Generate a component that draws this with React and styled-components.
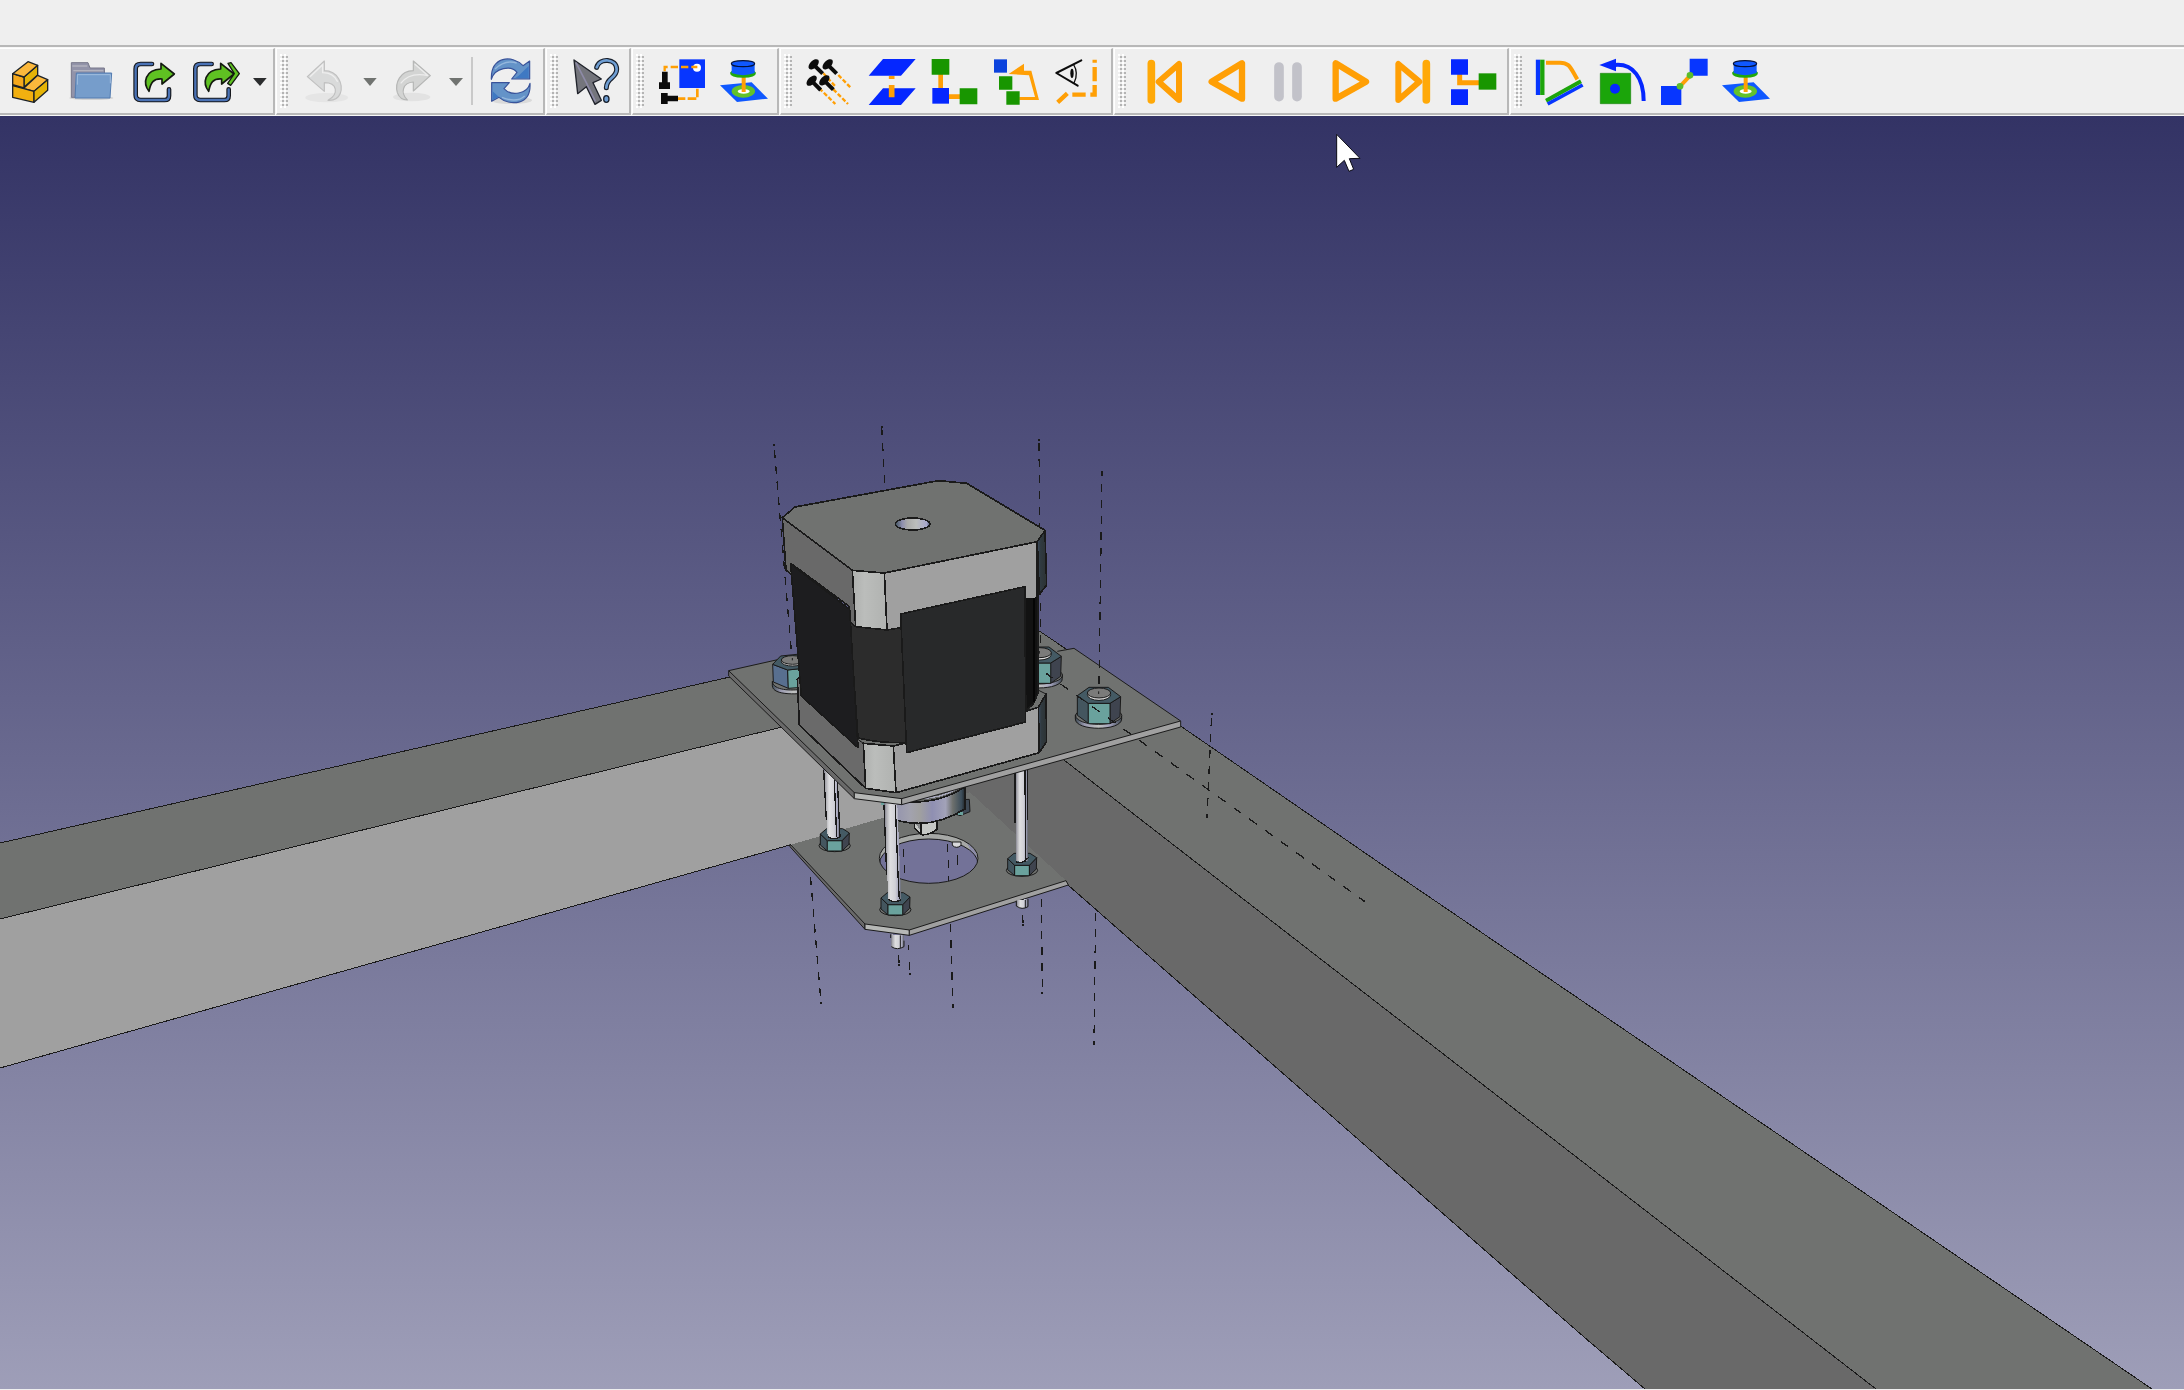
import React from "react";
import styled, { createGlobalStyle } from "styled-components";

const GlobalStyle = createGlobalStyle`
  *, *::before, *::after { box-sizing: border-box; }
  html, body { margin: 0; padding: 0; }
  body { background: #efefef; font-family: "Noto Sans", "Liberation Sans", sans-serif; }
`;

const Window = styled.div`
  display: flex;
  flex-direction: column;
  height: 100vh;
  overflow: hidden;
`;

const MenuArea = styled.header`
  flex: none;
  height: 45px;
  background: #efefef;
`;

const ToolbarRow = styled.div`
  flex: none;
  display: flex;
  gap: 1px;
  padding: 1px 0;
  overflow: hidden;
  background: #f7f7f7;
  border-top: 2px solid #b8b8b8;
`;

const ToolGroup = styled.div`
  flex: ${(p) => (p.$grow ? "1 0 auto" : "none")};
  display: flex;
  align-items: stretch;
  height: 67px;
  padding-right: ${(p) => (p.$cut ? 1 : 3)}px;
  background: #efefef;
  border-style: solid;
  border-color: #ffffff #b8b8b8 #b8b8b8 #ffffff;
  border-width: 1px ${(p) => (p.$grow ? 0 : 2)}px 2px ${(p) => (p.$cut ? 0 : 1)}px;
`;

const Handle = styled.span`
  width: 8px;
  height: 54px;
  margin: 5px 6px 5px 3px;
  background:
    conic-gradient(from 270deg at 50% 50%, #ffffff 90deg, transparent 0) 0 0 / 4px 4px,
    conic-gradient(from 90deg at 50% 50%, #b4b4b4 90deg, transparent 0) 0 0 / 4px 4px;
`;

const ToolButton = styled.button`
  display: flex;
  align-items: center;
  justify-content: center;
  width: ${(p) => (p.$narrow ? 24 : 62)}px;
  padding: 0;
  border: 0;
  background: transparent;
  &:hover:enabled { background: #e4e4e4; }
`;

const Glyph = styled.svg`
  display: block;
  flex: none;
  width: ${(p) => (p.$narrow ? 24 : 50)}px;
  height: 50px;
`;

const Divider = styled.span`
  width: 2px;
  height: 48px;
  margin: 8px 5px;
  background: #c9c9c9;
`;

const Viewport = styled.main`
  flex: 1;
  min-height: 0;
  background: linear-gradient(#333365, #9e9eb8);
  border-bottom: 1px solid #efefef;
`;

const Scene = styled.svg`
  display: block;
  width: 100%;
  height: 100%;
`;

const ORANGE = "#ff9f05";
const BLUE = "#0527ff";
const GREEN = "#189600";
const INK = "#1a1a1a";

function Tool({ label, x, disabled, narrow, children }) {
  return (
    <ToolButton type="button" aria-label={label} title={label} disabled={disabled} $narrow={narrow}>
      <Glyph $narrow={narrow} viewBox={`${x} 78 ${narrow ? 72 : 150} 150`} aria-hidden="true">
        {children}
      </Glyph>
    </ToolButton>
  );
}

function PlanarGlyph() {
  return (
    <>
      <path d="M1050 166L1145 157L1194 206L1101 216Z" fill="#0f58ff" />
      <ellipse cx="1120" cy="184" rx="35" ry="19" fill="#63c22b" />
      <ellipse cx="1121" cy="184" rx="18" ry="7" fill="#fff" />
      <path d="M1121 140V186" stroke={ORANGE} strokeWidth="12" />
      <path d="M1080 128Q1080 143 1119 143Q1158 143 1158 128L1150 120H1088Z" fill="#1fa80c" />
      <path d="M1085 101V129Q1119 142 1154 129V101Z" fill="#0f58ff" />
      <ellipse cx="1119" cy="101" rx="35" ry="9" fill="#0f58ff" stroke="#04113a" strokeWidth="3.5" />
    </>
  );
}

function ExportGlyph() {
  return (
    <>
      <path d="M456 102H422Q407 102 407 117V195Q407 210 422 210H494Q507 210 507 197V178" fill="none" stroke="#16181d" strokeWidth="14" strokeLinecap="round" />
      <path d="M456 102H422Q407 102 407 117V195Q407 210 422 210H494Q507 210 507 197V178" fill="none" stroke="#4a72b5" strokeWidth="7" strokeLinecap="round" />
      <path d="M483 100L523 132L486 162V147C460 145 452 158 447 184C428 160 434 119 483 117Z" fill="#5fc122" stroke="#141a10" strokeWidth="5" strokeLinejoin="round" />
    </>
  );
}

function Screw({ x, y }) {
  return (
    <g transform={`translate(${x} ${y})`} fill="#0c0c0c">
      <ellipse cx="0" cy="0" rx="19" ry="11" transform="rotate(-45)" />
      <path d="M2 3L27 28" stroke="#0c0c0c" strokeWidth="12" />
    </g>
  );
}

const POLY = { stroke: INK, strokeWidth: 3, strokeLinejoin: "round" };

function Face({ pts, fill, edge = 3 }) {
  return <polygon points={pts} fill={fill} {...POLY} strokeWidth={edge} />;
}

function Axis({ x1, y1, x2, y2, dash = "24 24", shift = 0, start, end }) {
  return (
    <g>
      <line x1={x1} y1={y1} x2={x2} y2={y2} stroke={INK} strokeWidth="4" strokeDasharray={dash} strokeDashoffset={-shift} />
      {start && <rect x={x1 - 3} y={y1 - 3} width="6" height="6" fill={INK} />}
      {end && <rect x={x2 - 3} y={y2 - 3} width="6" height="6" fill={INK} />}
    </g>
  );
}

function BigNut({ dx = 0, dy = 0 }) {
  return (
    <g transform={`translate(${dx} ${dy})`}>
      <path d="M1126 945V957C1126 994 1265 994 1265 957V945Z" fill="url(#washer)" {...POLY} />
      <ellipse cx="1196" cy="947" rx="69" ry="26" fill="#707270" {...POLY} />
      <Face pts="1132,887 1165,910 1165,970 1132,946" fill="#44565f" />
      <Face pts="1230,910 1262,890 1260,950 1230,971" fill="#3f444f" />
      <Face pts="1165,910 1230,910 1230,971 1165,971" fill="#6aa29d" />
      <Face pts="1167,862 1225,862 1262,890 1230,910 1165,910 1132,887" fill="#445a64" />
      <ellipse cx="1197" cy="884" rx="35" ry="17" fill="#dcdcdc" {...POLY} />
      <ellipse cx="1197" cy="879" rx="35" ry="15" fill="#7b7b7a" {...POLY} />
      <path d="M1196 874V882" {...POLY} />
    </g>
  );
}

function SmallNut({ dx = 0, dy = 0 }) {
  return (
    <g transform={`translate(${dx} ${dy})`}>
      <ellipse cx="846" cy="451" rx="47" ry="18" fill="#707270" {...POLY} />
      <Face pts="803,416 824,436 824,467 803,449" fill="#44565f" />
      <Face pts="868,436 890,413 889,447 868,467" fill="#3f444f" />
      <Face pts="824,436 868,436 868,467 824,467" fill="#6aa29d" />
      <Face pts="822,400 870,400 890,413 868,436 824,436 803,416" fill="#445a64" />
    </g>
  );
}

function Rod({ pts, line }) {
  return (
    <g>
      <polygon points={pts} fill="url(#rod)" />
      <path d={line} fill="none" stroke={INK} strokeWidth="4" />
    </g>
  );
}

function Model() {
  return (
    <Scene viewBox="0 116 2184 1273" preserveAspectRatio="xMidYMid slice" shapeRendering="crispEdges" role="img" aria-label="Motor mounted on two beams">
      <defs>
        <linearGradient id="rod">
          <stop offset="0" stopColor="#65657a" />
          <stop offset=".12" stopColor="#a6a6ac" />
          <stop offset=".35" stopColor="#dedee0" />
          <stop offset=".65" stopColor="#d0d0d6" />
          <stop offset=".85" stopColor="#a4a4bb" />
          <stop offset="1" stopColor="#5e636a" />
        </linearGradient>
        <linearGradient id="washer">
          <stop offset="0" stopColor="#3e4b54" />
          <stop offset=".2" stopColor="#9a9ab0" />
          <stop offset=".5" stopColor="#c0c2c0" />
          <stop offset=".75" stopColor="#a0a0bb" />
          <stop offset="1" stopColor="#414a52" />
        </linearGradient>
        <linearGradient id="corner">
          <stop offset="0" stopColor="#aeb0ae" />
          <stop offset=".35" stopColor="#bbbdbb" />
          <stop offset="1" stopColor="#b0b2b0" />
        </linearGradient>
        <linearGradient id="backCorner">
          <stop offset="0" stopColor="#3d4b5f" />
          <stop offset=".35" stopColor="#303a40" />
          <stop offset="1" stopColor="#2c3233" />
        </linearGradient>
        <linearGradient id="bore">
          <stop offset="0" stopColor="#3f525c" />
          <stop offset=".2" stopColor="#8f8faf" />
          <stop offset=".35" stopColor="#aaaaaa" />
          <stop offset=".6" stopColor="#bcbebc" />
          <stop offset=".9" stopColor="#a8a8cc" />
          <stop offset="1" stopColor="#4b5570" />
        </linearGradient>
        <linearGradient id="boss">
          <stop offset="0" stopColor="#8c8cae" />
          <stop offset=".3" stopColor="#a2a2ae" />
          <stop offset=".42" stopColor="#a0a0a0" />
          <stop offset=".58" stopColor="#8f8fb2" />
          <stop offset=".75" stopColor="#a2a2b8" />
          <stop offset=".84" stopColor="#6d706d" />
          <stop offset=".95" stopColor="#3c4d5a" />
          <stop offset="1" stopColor="#1f2427" />
        </linearGradient>
        <clipPath id="holeClip">
          <ellipse cx="566" cy="415" rx="148" ry="75" />
        </clipPath>
      </defs>

      <polygon points="0,843 730,677 900,640 900,700 780,727 0,919" fill="#707270" />
      <polygon points="0,919 780,727 900,697 900,814 787,846 0,1068" fill="#a0a0a0" />
      <path d="M0 843L730 677M0 919L782 727M0 1068L790 845" stroke={INK} fill="none" />

      <polygon points="1020,618 1039,631 1182,727 1400,877 1860,1190 2152,1389 1876,1389 1619,1190 1064,760 1000,720" fill="#707270" />
      <polygon points="900,700 1000,710 1064,760 1619,1190 1876,1389 1645,1389 1584,1337 1142,950 1068,885 900,820" fill="#696969" />
      <path d="M1020 618L1182 727L1400 877L1860 1190L2152 1389M1064 760L1309 950L1619 1190L1876 1389M1068 885L1142 950L1584 1337L1645 1389" stroke={INK} fill="none" />

      <g transform="translate(740 720) scale(.33333)">
        <polygon points="150,375 690,217 978,482 508,630 375,612" fill="#707270" />
        <Face pts="150,372 375,612 375,628 150,380" fill="#696969" />
        <Face pts="375,612 508,630 508,646 375,628" fill="#b6b8b6" />
        <Face pts="508,630 978,482 985,495 508,646" fill="#a0a0a0" />
        <ellipse cx="566" cy="415" rx="148" ry="75" fill="#a6a8a6" />
        <path d="M680 366Q718 395 712 430L695 400Z" fill="#8d8da8" />
        <ellipse cx="566" cy="432" rx="148" ry="75" fill="#737298" {...POLY} clipPath="url(#holeClip)" />
        <ellipse cx="566" cy="415" rx="148" ry="75" fill="none" {...POLY} />
        <path d="M637 366V376Q650 388 663 376V366Z" fill="#d8d8dc" {...POLY} />
        <path d="M490 388V412M493 435V458M622 372V396M625 420V444M626 468V484M653 405V434" stroke={INK} strokeWidth="4" />

        <Face pts="640,240 688,238 690,275 660,287 640,280" fill="#3f4a56" />
        <rect x="654" y="276" width="14" height="10" fill="#6aa29d" />
        <path d="M524 300V325L545 344Q570 346 592 327V300Z" fill="#c6c8c6" {...POLY} strokeWidth="5" />
        <path d="M527 310L543 334V310Z" fill="#86888a" />
        <path d="M543 308V340" {...POLY} strokeWidth="5" />
        <path d="M440 290Q560 340 676 266V180H440Z" fill="url(#boss)" {...POLY} strokeWidth="5" />
        <path d="M440 235Q570 268 676 200V160H440Z" fill="#646664" {...POLY} strokeWidth="5" />
        <path d="M520 236Q600 238 655 205" stroke="#a8a8bc" strokeWidth="4" fill="none" />

        <SmallNut dx={-562} dy={-74} />
        <SmallNut />
        <SmallNut dx={-380} dy={118} />
        <path d="M422 250H460" stroke="#6aa29d" strokeWidth="12" />
        <Rod pts="250,145 290,145 300,350 281,355 263,350" line="M251 150L259 300M283 180L290 350M263 350Q281 362 300 350M292 180L300 350" />
        <Rod pts="432,250 472,250 484,538 465,545 445,538" line="M432 255L440 465M466 255L474 465L478 538M445 538Q464 552 484 538" />
        <Rod pts="826,148 862,148 864,422 846,428 828,422" line="M825 150V310M855 150L857 425M828 425Q846 434 866 412M862 150V300" />
        <path d="M452 643V680Q472 692 492 680V646Z" fill="url(#rod)" />
        <path d="M452 643V654M454 680Q472 692 492 680V662M481 646V684" {...POLY} fill="none" />
        <path d="M829 542V560Q846 571 864 560V537Z" fill="url(#rod)" />
        <path d="M829 542V558Q846 571 864 560V537M856 540V564" {...POLY} fill="none" />

        <Axis x1={211} y1={465} x2={243} y2={849} shift={5} end />
        <Axis x1={476} y1={705} x2={477} y2={735} end />
        <Axis x1={505} y1={675} x2={510} y2={762} dash="16 34 24 60" end />
        <Axis x1={631} y1={612} x2={639} y2={860} end />
        <Axis x1={848} y1={585} x2={849} y2={615} end />
        <Axis x1={904} y1={538} x2={907} y2={819} end />
        <Axis x1={1067} y1={580} x2={1062} y2={972} end />
      </g>

      <g transform="translate(700 400) scale(.33333)">
        <polygon points="86,812 300,762 1060,755 1122,745 1442,963 605,1196 463,1178" fill="#707270" />
        <path d="M86 812L300 764M1072 754L1122 745L1442 963" {...POLY} fill="none" />
        <Face pts="86,812 463,1178 463,1196 240,978 86,828" fill="#696969" />
        <Face pts="463,1178 605,1196 605,1214 463,1196" fill="#b6b8b6" />
        <Face pts="605,1196 1442,963 1442,981 605,1214" fill="#a0a0a0" />

        <path d="M217 845V857C217 888 300 884 345 875V840Z" fill="url(#washer)" {...POLY} />
        <path d="M217 845C222 872 270 872 310 868V840Z" fill="#707270" {...POLY} />
        <Face pts="218,793 263,810 265,865 220,846" fill="#586f8f" />
        <Face pts="263,810 330,803 330,860 265,865" fill="#6aa29d" />
        <Face pts="242,768 320,760 340,790 300,806 263,810 218,793" fill="#445a64" />
        <ellipse cx="278" cy="785" rx="34" ry="13" fill="#dcdcdc" {...POLY} />
        <ellipse cx="278" cy="780" rx="34" ry="13" fill="#7b7b7a" {...POLY} />
        <path d="M277 774V781" {...POLY} />
        <BigNut dx={-178} dy={-121} />
        <BigNut />

        <Axis x1={222} y1={135} x2={275} y2={765} shift={14} start />
        <Axis x1={545} y1={80} x2={554} y2={252} start />
        <Axis x1={1017} y1={120} x2={1022} y2={745} shift={10} start />
        <Axis x1={1206} y1={216} x2={1197} y2={862} shift={-12} start />
        <Axis x1={1535} y1={942} x2={1521} y2={1252} shift={13} start end />
        <Axis x1={1040} y1={822} x2={1992} y2={1503} dash="28 30" shift={-7} start end />

        <Face pts="985,930 1015,922 1038,882 1016,871 1008,890" fill="#707270" />
        <Face edge={5} pts="1015,922 1038,882 1040,1025 1018,1058" fill="url(#backCorner)" />
        <Face edge={5} pts="292,838 304,828 480,1020 492,1030 497,1165 298,975" fill="#6a6a6a" />
        <Face pts="474,1012 620,1027 620,1038 580,1038 490,1030 474,1018" fill="#707270" />
        <Face edge={5} pts="580,1038 622,1028 980,933 1015,922 1018,1058 588,1178" fill="#a0a0a0" />
        <Face edge={5} pts="490,1030 580,1038 588,1178 497,1165" fill="url(#corner)" />

        <Face edge={5} pts="970,560 1014,560 1014,880 1000,912 978,930" fill="#121212" />
        <path d="M1003 595V905" stroke="#050505" strokeWidth="5" />
        <path d="M449 660L604 670L622 1028Q540 1030 474 1014Z" fill="#2c2c2c" {...POLY} strokeWidth="5" />

        <path d="M247 353L457 511L467 680L449 665V620L275 492V525L258 510Z" fill="#696969" {...POLY} strokeWidth="5" />
        <Face edge={5} pts="1012,425 1035,391 1040,555 1018,583" fill="url(#backCorner)" />
        <polygon points="553,519 1012,425 1012,592 977,595 975,570 604,650 604,683 561,690" fill="#a0a0a0" />
        <path d="M604 683L561 690L553 519L1012 425V592" {...POLY} strokeWidth="5" fill="none" />
        <Face edge={5} pts="457,511 553,519 561,690 467,680" fill="url(#corner)" />
        <Face edge={5} pts="272,492 449,628 474,1043 304,888" fill="#1d1d1f" />
        <Face edge={5} pts="602,642 975,560 977,966 620,1058" fill="#28292a" />
        <Face edge={5} pts="247,353 285,321 715,242 800,250 1035,391 1012,425 553,519 457,511" fill="#707270" />
        <ellipse cx="638" cy="372" rx="52" ry="18" fill="url(#bore)" {...POLY} strokeWidth="5" />
      </g>

      <polygon transform="translate(1110 30) scale(.33333)" points="680,313 750,385 718,386 731,418 717,424 703,391 680,412" fill="#fff" stroke="#0a0a14" strokeWidth="3" shapeRendering="auto" />
    </Scene>
  );
}

function Toolbars() {
  return (
    <ToolbarRow role="toolbar" aria-label="Tools">
      <ToolGroup $cut>
        <Tool label="Part" x={18}>
          <g stroke="#1c2228" strokeWidth="4" strokeLinejoin="round">
            <path d="M72 141L113 106V135L72 172Z" fill="#e5b306" />
            <path d="M38 164L72 174L113 136L143 149L103 184L38 167Z" fill="#fbb83c" />
            <path d="M38 167L102 184V217L38 202Z" fill="#f2b010" />
            <path d="M102 184L143 149V181L102 217Z" fill="#e5b306" />
            <path d="M38 131L72 141V174L38 164Z" fill="#f5a81c" />
            <path d="M38 131L84 95L113 106L72 141Z" fill="#fbb83c" />
          </g>
        </Tool>
        <Tool label="Group" x={204}>
          <ellipse cx="274" cy="204" rx="66" ry="6" fill="#d2d2d2" />
          <path d="M214 202V98H264L270 114H313L316 202Z" fill="#9293a9" stroke="#77778a" strokeWidth="3" />
          <path d="M217 108H262M220 122H310" stroke="#b3b3be" strokeWidth="4" />
          <path d="M229 129H335L330 204H225Z" fill="#769dcb" stroke="#527bb0" strokeWidth="3" strokeLinejoin="round" />
          <path d="M232 164V134H331V160" stroke="#a9c4e2" strokeWidth="2.5" fill="none" />
        </Tool>
        <Tool label="Make link" x={390}><ExportGlyph /></Tool>
        <Tool label="Make sub-link" x={576}>
          <g transform="translate(179 0)">
            <ExportGlyph />
          </g>
          <path d="M684 100L693 98L718 131L692 166L683 160L703 131Z" fill="#5fc122" stroke="#141a10" strokeWidth="4" strokeLinejoin="round" />
        </Tool>
        <Tool label="Link options" x={744} narrow><path d="M759 144H800L780 168Z" fill="#2b2d2e" /></Tool>
      </ToolGroup>
      <ToolGroup>
        <Handle />
        <Tool label="Undo" x={900} disabled>
          <ellipse cx="980" cy="203" rx="64" ry="14" fill="#e5e5e5" />
          <path d="M922 140L973 93V122C1015 122 1030 165 1021 190Q1012 213 984 211C1018 192 1012 158 973 158V184Z" fill="#d9dada" stroke="#c0c0c0" strokeWidth="3.5" strokeLinejoin="round" />
          <path d="M930 140L968 104V128Q1000 128 1013 155" fill="none" stroke="#eeeeee" strokeWidth="4" />
        </Tool>
        <Tool label="Undo history" x={-42} narrow disabled><path d="M-20 144H20L0 168Z" fill="#707370" /></Tool>
        <Tool label="Redo" x={48} disabled>
          <ellipse cx="125" cy="201" rx="56" ry="13" fill="#e2e2e2" />
          <path d="M181 137L130 93V122C90 122 74 160 82 188Q90 210 112 210C90 188 98 158 130 156V183Z" fill="#d3d4d3" stroke="#b5b6b5" strokeWidth="3.5" strokeLinejoin="round" />
          <path d="M134 102L174 137Q120 125 92 160" fill="none" stroke="#ececec" strokeWidth="4" />
        </Tool>
        <Tool label="Redo history" x={216} narrow disabled><path d="M237 144H279L258 168Z" fill="#707370" /></Tool>
        <Divider />
        <Tool label="Refresh" x={342}>
          <ellipse cx="424" cy="211" rx="62" ry="11" fill="#dadada" />
          <g stroke="#39539a" strokeWidth="3.5" strokeLinejoin="round">
            <path d="M364 148C362 80 425 72 459 107L479 93V147H425L441 127C425 105 374 112 364 148Z" fill="#6493c8" />
            <path d="M480 160C484 228 418 228 387 202L365 214V158H418L402 176C424 200 472 192 480 160Z" fill="#6493c8" />
          </g>
          <path d="M445 138L476 108V144H436ZM368 210V184L386 200Z" fill="#3f79c3" />
          <path d="M375 117Q405 88 440 99M396 202Q440 220 464 198" stroke="#94b6dc" strokeWidth="4" fill="none" />
        </Tool>
      </ToolGroup>
      <ToolGroup>
        <Handle />
        <Tool label="What's this?" x={600}>
          <path d="M612 90L694 147L669 158L694 211L675 223L649 170L623 191Z" fill="#74757c" stroke="#20232b" strokeWidth="4" strokeLinejoin="round" />
          <path d="M618 98L650 160L676 214" stroke="#8d8aa6" strokeWidth="5" fill="none" />
          <path d="M680 112C688 82 740 85 740 118C740 146 709 142 709 173" stroke="#19202c" strokeWidth="15" strokeLinecap="round" fill="none" />
          <path d="M680 112C688 82 740 85 740 118C740 146 709 142 709 173" stroke="#6f9ed3" strokeWidth="8" strokeLinecap="round" fill="none" />
          <ellipse cx="709" cy="207" rx="8" ry="10" fill="#6f9ed3" stroke="#19202c" strokeWidth="4" />
        </Tool>
      </ToolGroup>
      <ToolGroup>
        <Handle />
        <Tool label="Insert part" x={858}>
          <path d="M928 88H1005V174H928Z" fill="#0736ff" />
          <circle cx="981" cy="113" r="12" fill="#fff" />
          <path d="M884 124V111H982" stroke={ORANGE} strokeWidth="7" strokeDasharray="22 9" fill="none" />
          <path d="M982 176V206H922" stroke={ORANGE} strokeWidth="8" strokeDasharray="26 7" fill="none" />
          <path d="M876 125H893V157H900V177H867V157H876ZM873 189H893V197H924V214H893V222H873Z" fill="#0b0b0b" />
        </Tool>
        <Tool label="Plane coincident" x={1044}><PlanarGlyph /></Tool>
      </ToolGroup>
      <ToolGroup>
        <Handle />
        <Tool label="Insert fasteners" x={72}>
          <path d="M130 130L165 168M175 135L212 173M118 175L166 222M160 178L204 222" stroke={ORANGE} strokeWidth="7" strokeDasharray="13 6" />
          <Screw x={101} y={103} />
          <Screw x={143} y={103} />
          <Screw x={95} y={152} />
          <Screw x={133} y={151} />
        </Tool>
        <Tool label="Plane alignment" x={258}>
          <path d="M309 87H407L363 137H266ZM309 175H407L363 225H266Z" fill={BLUE} />
          <path d="M335 138V147M335 165V202" stroke={ORANGE} strokeWidth="17" />
        </Tool>
        <Tool label="Attach elements" x={444}>
          <path d="M482 130V176M505 200H542" stroke={ORANGE} strokeWidth="14" />
          <path d="M455 87H508V134H455ZM539 175H592V223H539Z" fill={GREEN} />
          <path d="M457 174H507V221H457Z" fill={BLUE} />
        </Tool>
        <Tool label="Move elements" x={630}>
          <path d="M686 132L732 101V122H754L777 210H718V201H765L747 136Z" fill={ORANGE} />
          <path d="M642 88H681V128H642Z" fill="#0c43dd" />
          <path d="M657 139H697V179H657ZM679 184H719V224H679Z" fill={GREEN} />
        </Tool>
        <Tool label="Toggle visibility" x={816}>
          <path d="M904 91L829 129L893 167" fill="none" stroke="#0c0c0c" strokeWidth="6" strokeLinejoin="round" strokeLinecap="round" />
          <path d="M880 102Q897 130 882 159" fill="none" stroke="#0c0c0c" strokeWidth="4" />
          <ellipse cx="876" cy="130" rx="5" ry="14" fill="#0c0c0c" />
          <path d="M944 89V98M944 111V154M944 165V194H931M917 194H877M862 190L833 217" fill="none" stroke={ORANGE} strokeWidth="13" />
        </Tool>
      </ToolGroup>
      <ToolGroup>
        <Handle />
        <Tool label="First step" x={84}>
          <path d="M124 101V210" stroke="#ffa908" strokeWidth="23" strokeLinecap="round" />
          <path d="M207 102V210L146 155Z" fill="none" stroke={ORANGE} strokeWidth="18" strokeLinejoin="round" />
        </Tool>
        <Tool label="Previous step" x={270}>
          <path d="M396 100V206L305 155Z" fill="none" stroke={ORANGE} strokeWidth="19" strokeLinejoin="round" />
        </Tool>
        <Tool label="Pause" x={456} disabled>
          <path d="M507 111V200M561 111V200" stroke="#c2c2c9" strokeWidth="29" strokeLinecap="round" />
        </Tool>
        <Tool label="Play" x={642}>
          <path d="M677 100V206L768 155Z" fill="none" stroke={ORANGE} strokeWidth="19" strokeLinejoin="round" />
        </Tool>
        <Tool label="Last step" x={828}>
          <path d="M949 101V210" stroke="#ffa908" strokeWidth="23" strokeLinecap="round" />
          <path d="M865 102V210L928 155Z" fill="none" stroke={ORANGE} strokeWidth="18" strokeLinejoin="round" />
        </Tool>
        <Tool label="Combine" x={1014}>
          <path d="M1049 132V158H1108" fill="none" stroke={ORANGE} strokeWidth="15" />
          <path d="M1023 88H1074V134H1023ZM1023 178H1074V225H1023Z" fill={BLUE} />
          <path d="M1106 130H1159V179H1106Z" fill={GREEN} />
        </Tool>
      </ToolGroup>
      <ToolGroup $grow>
        <Handle />
        <Tool label="Angle" x={162}>
          <path d="M174 89V195" stroke="#0736ff" strokeWidth="13" />
          <path d="M187 89V195" stroke="#1da50b" strokeWidth="13" />
          <path d="M198 98H236C270 96 272 116 292 148" fill="none" stroke={ORANGE} strokeWidth="12" />
          <path d="M198 212L303 154" stroke="#1da50b" strokeWidth="12" />
          <path d="M203 222L308 165" stroke="#0736ff" strokeWidth="11" />
        </Tool>
        <Tool label="Rotate" x={348}>
          <path d="M361 130H452V221H361Z" fill="#1ba50a" stroke="#168309" strokeWidth="2" />
          <circle cx="405" cy="176" r="15" fill={BLUE} />
          <path d="M358 105L408 86V124Z" fill={BLUE} />
          <path d="M405 105C460 100 491 145 491 213" fill="none" stroke={BLUE} strokeWidth="12" />
        </Tool>
        <Tool label="Linear move" x={534}>
          <path d="M601 168L631 136" stroke={ORANGE} strokeWidth="12" />
          <path d="M629 86H683V137H629ZM543 168H604V225H543Z" fill="#0736ff" />
          <circle cx="600" cy="169" r="10" fill="#5bbd2b" />
          <circle cx="630" cy="136" r="10" fill="#5bbd2b" />
        </Tool>
        <Tool label="Plane constraint" x={720}>
          <g transform="translate(-324 0)"><PlanarGlyph /></g>
        </Tool>
      </ToolGroup>
    </ToolbarRow>
  );
}

export default function App() {
  return (
    <>
      <GlobalStyle />
      <Window>
        <MenuArea />
        <Toolbars />
        <Viewport>
          <Model />
        </Viewport>
      </Window>
    </>
  );
}
